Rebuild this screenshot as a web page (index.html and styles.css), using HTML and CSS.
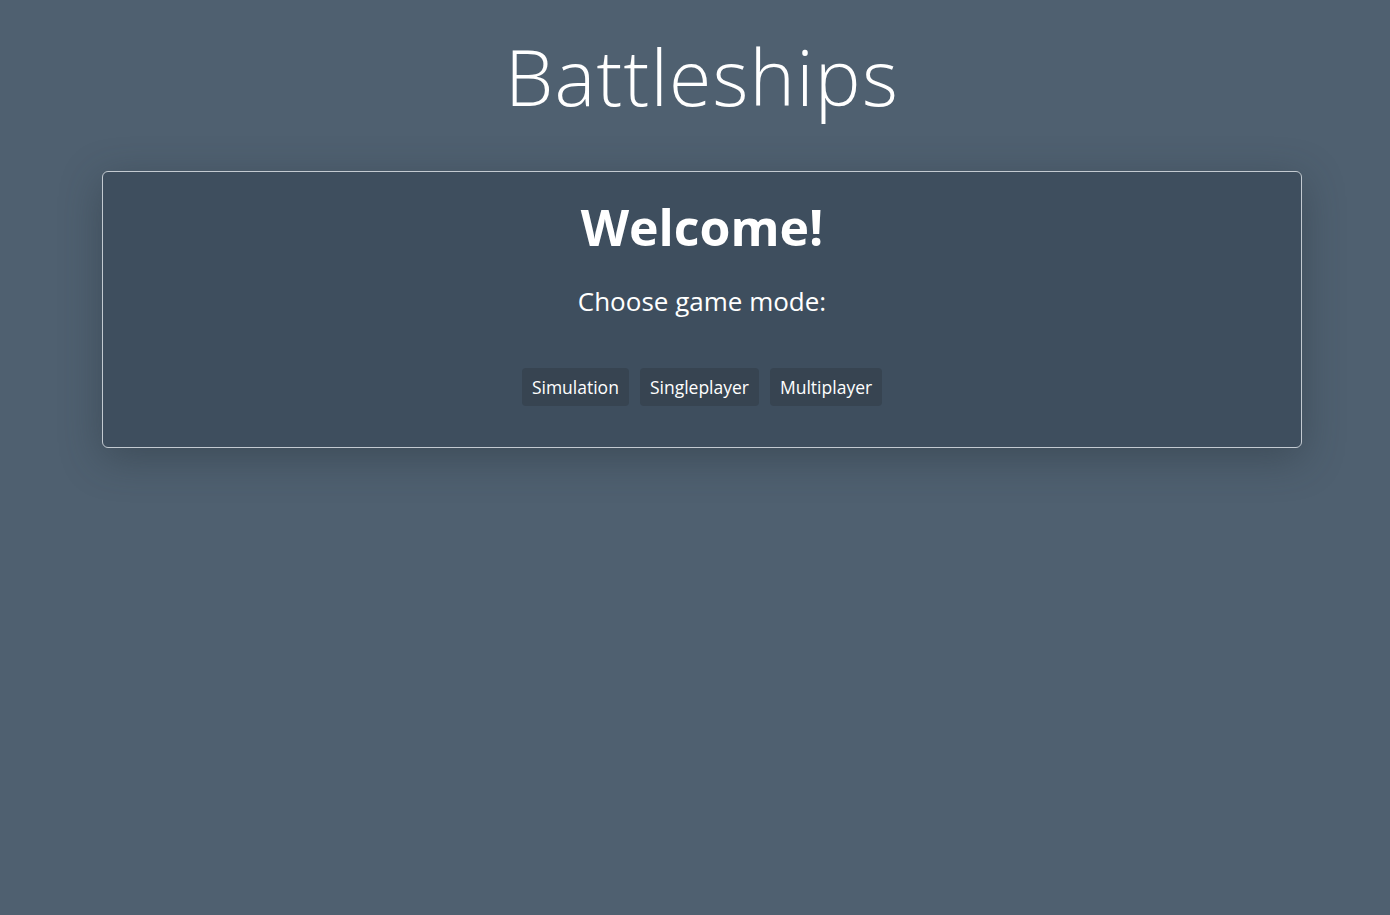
FILE: index.html
```html
<!DOCTYPE html>
<html lang="en">
<head>
<meta charset="utf-8">
<title>Battleships</title>
<link rel="stylesheet" href="styles.css">
</head>
<body>
<header class="page-header">
  <h1 class="title">Battleships</h1>
</header>
<main class="content">
  <section class="card">
    <h2 class="welcome">Welcome!</h2>
    <p class="prompt">Choose game mode:</p>
    <div class="modes">
      <button class="mode-btn">Simulation</button>
      <button class="mode-btn">Singleplayer</button>
      <button class="mode-btn">Multiplayer</button>
    </div>
  </section>
</main>
</body>
</html>
```

FILE: styles.css
```css
html, body {
  margin: 0;
  padding: 0;
}
body {
  background: #4f6070;
  color: #ffffff;
  font-family: "Open Sans", "DejaVu Sans", sans-serif;
  min-height: 915px;
}
.page-header {
  display: flex;
  justify-content: center;
  padding-top: 30px;
  padding-left: 14px;
}
.title {
  margin: 0;
  font-weight: 300;
  font-size: 77px;
  line-height: 94px;
  letter-spacing: 1.2px;
}
.content {
  padding: 47px 89px 0 102px;
}
.card {
  box-sizing: border-box;
  width: 1200px;
  height: 277px;
  background: #3e4e5e;
  border: 1px solid #c3cad1;
  border-radius: 6px;
  box-shadow: 0 10px 40px rgba(40, 50, 60, 0.45);
  display: flex;
  flex-direction: column;
  align-items: center;
  padding-top: 25px;
}
.welcome {
  margin: 0;
  font-size: 50px;
  font-weight: 700;
  line-height: 60px;
}
.prompt {
  margin: 28px 0 0;
  font-size: 26px;
  line-height: 32px;
}
.modes {
  display: flex;
  gap: 11px;
  margin-top: 51px;
}
.mode-btn {
  font-family: inherit;
  font-size: 17.5px;
  color: #ffffff;
  background: #374451;
  border: none;
  border-radius: 4px;
  height: 38px;
  padding: 0 10px;
}
```
